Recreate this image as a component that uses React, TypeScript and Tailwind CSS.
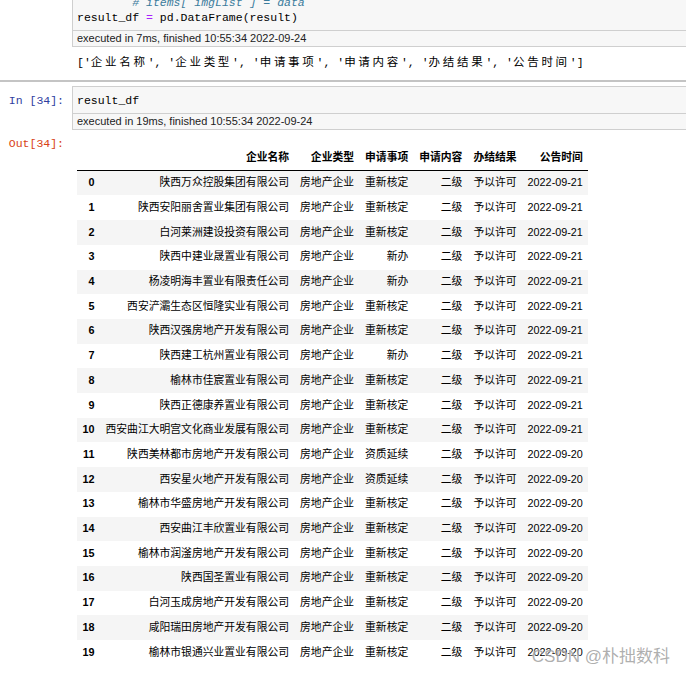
const mono = "font-['Liberation_Mono','Noto_Sans_CJK_SC',monospace]";
const sans = "font-['Liberation_Sans','Noto_Sans_CJK_SC',sans-serif]";

const columns = ["企业名称", "企业类型", "申请事项", "申请内容", "办结结果", "公告时间"];

const rows: [string, string][] = [
  ["陕西万众控股集团有限公司", "重新核定"],
  ["陕西安阳丽舍置业集团有限公司", "重新核定"],
  ["白河莱洲建设投资有限公司", "重新核定"],
  ["陕西中建业晟置业有限公司", "新办"],
  ["杨凌明海丰置业有限责任公司", "新办"],
  ["西安浐灞生态区恒隆实业有限公司", "重新核定"],
  ["陕西汉强房地产开发有限公司", "重新核定"],
  ["陕西建工杭州置业有限公司", "新办"],
  ["榆林市佳宸置业有限公司", "重新核定"],
  ["陕西正德康养置业有限公司", "重新核定"],
  ["西安曲江大明宫文化商业发展有限公司", "重新核定"],
  ["陕西美林都市房地产开发有限公司", "资质延续"],
  ["西安星火地产开发有限公司", "资质延续"],
  ["榆林市华盛房地产开发有限公司", "重新核定"],
  ["西安曲江丰欣置业有限公司", "重新核定"],
  ["榆林市润滏房地产开发有限公司", "重新核定"],
  ["陕西国圣置业有限公司", "重新核定"],
  ["白河玉成房地产开发有限公司", "重新核定"],
  ["咸阳瑞田房地产开发有限公司", "重新核定"],
  ["榆林市银通兴业置业有限公司", "重新核定"],
];

function ExecBar({ text }: { text: string }) {
  return (
    <div
      className={`h-[16px] border-t border-[#cfcfcf] bg-[#f7f7f7] px-[4px] text-[11px] leading-[15px] text-[#222] ${sans}`}
    >
      {text}
    </div>
  );
}

export default function App() {
  return (
    <div className="relative w-[686px] h-[674px] overflow-hidden bg-white">
      {/* previous cell, scrolled partly out of view */}
      <div className="flex -mt-[14px]">
        <div className="w-[72px] shrink-0" />
        <div className="flex-1 border border-r-0 border-[#cfcfcf] bg-[#f7f7f7]">
          <div className={`pt-[8px] pb-[5px] px-[4px] text-[11.5px] leading-[15px] whitespace-pre text-black ${mono}`}>
            <div className="italic text-[#3b7c9c]">{"        # items[ imgList ] = data"}</div>
            <div>
              result_df <span className="text-[#aa22ff]">=</span> pd.DataFrame(result)
            </div>
          </div>
          <ExecBar text="executed in 7ms, finished 10:55:34 2022-09-24" />
        </div>
      </div>
      <div className={`h-[33px] pl-[77px] pt-[8px] text-[11.5px] leading-[15px] text-black whitespace-pre ${mono}`}>
        [
        {columns.map((c, i) => (
          <span key={c}>
            '<span className="tracking-[2.7px]">{c}</span>'{i < columns.length - 1 ? ", " : ""}
          </span>
        ))}
        ]
      </div>
      <div className="h-[2px] bg-[#c4c4c4]" />

      {/* In [34] */}
      <div className="flex mt-[4px]">
        <div className={`w-[72px] shrink-0 pr-[8px] pt-[7px] text-right text-[11.5px] leading-[15px] text-[#303f9f] whitespace-pre ${mono}`}>
          In [34]:
        </div>
        <div className="flex-1 border border-r-0 border-[#cfcfcf] bg-[#f7f7f7]">
          <div className={`pt-[6px] pb-[5px] px-[4px] text-[11.5px] leading-[15px] text-black ${mono}`}>result_df</div>
          <ExecBar text="executed in 19ms, finished 10:55:34 2022-09-24" />
        </div>
      </div>

      {/* Out [34] */}
      <div className="flex">
        <div className={`w-[72px] shrink-0 pr-[8px] pt-[6px] text-right text-[11.5px] leading-[15px] text-[#d84315] ${mono}`}>
          Out[34]:
        </div>
        <div className="pl-[5px] pt-[15px]">
          <table className={`border-collapse text-[10.8px] leading-[13.7px] text-black ${sans}`}>
            <thead className="border-b border-black">
              <tr>
                <th className="px-[5.5px] py-[5.5px]" />
                {columns.map((c) => (
                  <th key={c} className="px-[5.5px] py-[5.5px] text-right font-bold whitespace-nowrap">
                    {c}
                  </th>
                ))}
              </tr>
            </thead>
            <tbody>
              {rows.map(([name, item], i) => (
                <tr key={i} className={i % 2 === 0 ? "bg-[#f5f5f5]" : ""}>
                  <th className="px-[5.5px] py-[5.5px] text-right font-bold">{i}</th>
                  <td className="px-[5.5px] py-[5.5px] text-right whitespace-nowrap">{name}</td>
                  <td className="px-[5.5px] py-[5.5px] text-right whitespace-nowrap">房地产企业</td>
                  <td className="px-[5.5px] py-[5.5px] text-right whitespace-nowrap">{item}</td>
                  <td className="px-[5.5px] py-[5.5px] text-right whitespace-nowrap">二级</td>
                  <td className="px-[5.5px] py-[5.5px] text-right whitespace-nowrap">予以许可</td>
                  <td className="px-[5.5px] py-[5.5px] text-right whitespace-nowrap">
                    {i <= 10 ? "2022-09-21" : "2022-09-20"}
                  </td>
                </tr>
              ))}
            </tbody>
          </table>
        </div>
      </div>

      {/* watermark */}
      <div
        className={`absolute right-[16px] bottom-[6px] text-[17px] leading-[22px] text-[#8c8c8c]/70 [text-shadow:0_0_2px_#fff] ${sans}`}
      >
        CSDN @朴拙数科
      </div>
    </div>
  );
}
